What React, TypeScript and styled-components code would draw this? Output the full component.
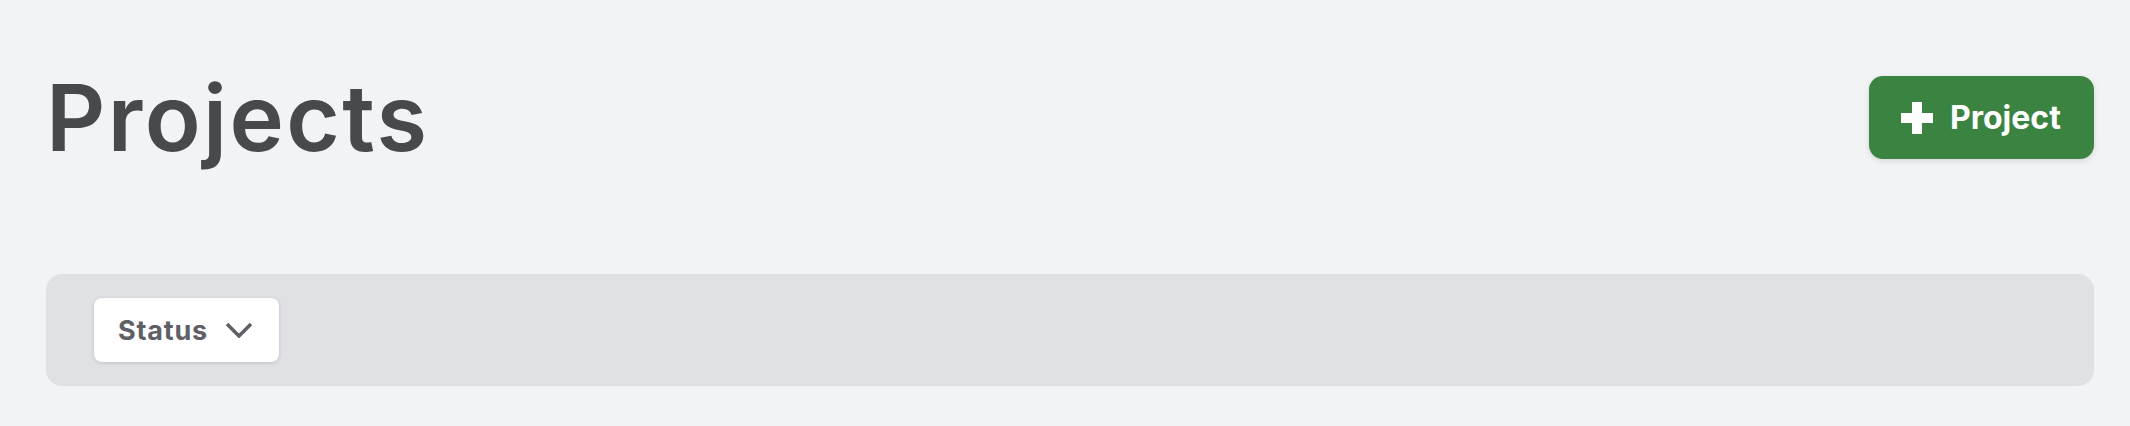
import styled, { createGlobalStyle } from "styled-components";

const GlobalStyle = createGlobalStyle`
  html, body {
    margin: 0;
    padding: 0;
    background: #f2f3f5;
    font-family: Inter, "Liberation Sans", sans-serif;
  }
`;

const Page = styled.div`
  padding: 0 36px 0 46px;
  display: flex;
  flex-direction: column;
`;

const Header = styled.div`
  display: flex;
  justify-content: space-between;
  align-items: center;
  height: 274px;
  padding: 76px 0 115px;
  box-sizing: border-box;
`;

const Title = styled.h1`
  margin: 0;
  font-family: Inter, sans-serif;
  font-weight: 600;
  font-size: 92px;
  line-height: 1;
  color: #48494d;
  letter-spacing: 2.4px;
`;

const AddButton = styled.button`
  display: flex;
  align-items: center;
  gap: 17px;
  width: 225px;
  height: 83px;
  padding: 0 0 0 32px;
  border: none;
  border-radius: 14px;
  background: #3a8341;
  color: #fff;
  font-family: Inter, sans-serif;
  font-weight: 700;
  font-size: 32px;
  box-shadow: 0 2px 6px rgba(0, 0, 0, 0.12);
  cursor: pointer;
`;

const FilterBar = styled.div`
  display: flex;
  align-items: center;
  height: 112px;
  padding: 0 48px;
  border-radius: 16px;
  background: #e0e1e5;
`;

const FilterButton = styled.button`
  display: flex;
  align-items: center;
  gap: 17px;
  height: 64px;
  width: 185px;
  padding: 0 0 0 24px;
  border: none;
  border-radius: 8px;
  background: #fff;
  color: #5f6066;
  font-family: Inter, sans-serif;
  font-weight: 700;
  font-size: 27px;
  letter-spacing: 0.8px;
  box-shadow: 0 1px 4px rgba(0, 0, 0, 0.14);
`;

const Plus = () => (
  <svg width="32" height="32" viewBox="0 0 32 32">
    <rect x="11" y="0" width="10" height="32" fill="#fff" />
    <rect x="0" y="11" width="32" height="10" fill="#fff" />
  </svg>
);

const Chevron = () => (
  <svg width="28" height="16" viewBox="0 0 28 16">
    <path d="M2 2 L14 14 L26 2" fill="none" stroke="#5f6066" strokeWidth="3.5" />
  </svg>
);

export default function App() {
  return (
    <>
      <GlobalStyle />
      <Page>
        <Header>
          <Title>Projects</Title>
          <AddButton>
            <Plus />
            Project
          </AddButton>
        </Header>
        <FilterBar>
          <FilterButton>
            Status
            <Chevron />
          </FilterButton>
        </FilterBar>
      </Page>
    </>
  );
}
